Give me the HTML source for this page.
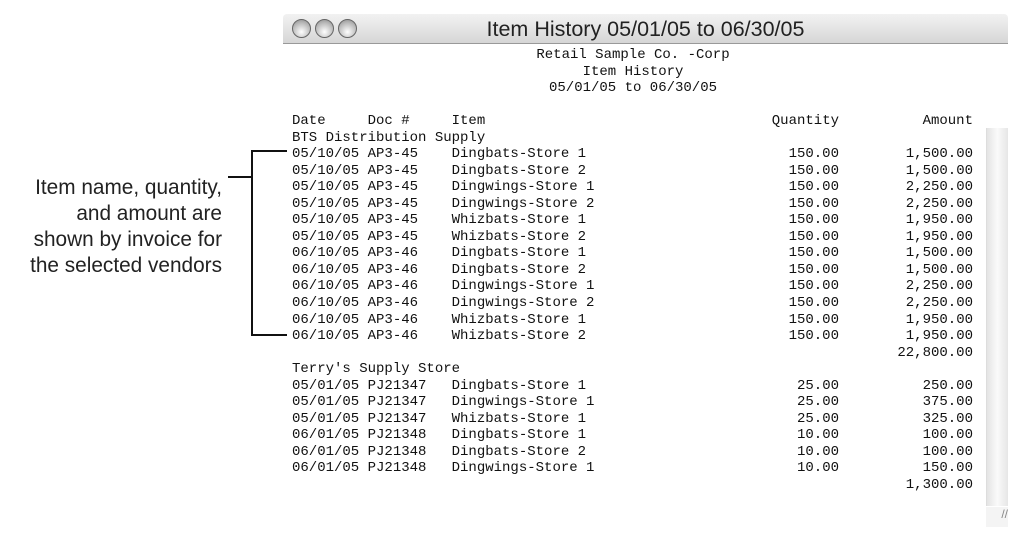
<!DOCTYPE html>
<html><head><meta charset="utf-8"><style>
body{margin:0;width:1024px;height:547px;background:#fff;position:relative;overflow:hidden;font-family:"Liberation Sans",sans-serif}
.win{position:absolute;left:283px;top:14px;width:725px;height:520px;}
.tb{position:absolute;left:0;top:0;width:725px;height:29px;background:linear-gradient(#f2f2f2,#d6d6d6);border-bottom:1px solid #999;border-radius:4px 4px 0 0}
.tb .t{position:absolute;left:0;right:0;top:3px;text-align:center;font-size:21.5px;color:#222;padding-left:0}
.btn{position:absolute;top:5px;width:17px;height:17px;border-radius:50%;border:1px solid #666;background:radial-gradient(circle at 50% 70%,#fff,#bbb 60%,#888)}
.m{position:absolute;font-family:"Liberation Mono",monospace;font-size:14px;line-height:16.55px;color:#111;white-space:pre;margin:0}
.sb{position:absolute;left:986px;top:128px;width:21px;height:378px;background:linear-gradient(90deg,#e4e4e4,#fafafa 50%,#e6e6e6);border-left:1px solid #ddd}
.ann{position:absolute;right:802px;top:175px;text-align:right;font-size:20.8px;line-height:26px;color:#222;white-space:nowrap}
.l{position:absolute;background:#111}
</style></head><body>
<div class="win">
<div class="tb"><div class="btn" style="left:9px"></div><div class="btn" style="left:32px"></div><div class="btn" style="left:55px"></div><div class="t">Item History 05/01/05 to 06/30/05</div></div>
</div>
<pre class="m" style="left:0;width:1266px;text-align:center;top:47px">Retail Sample Co. -Corp
Item History
05/01/05 to 06/30/05</pre>
<pre class="m" style="left:292px;top:113px">Date     Doc #     Item
BTS Distribution Supply
05/10/05 AP3-45    Dingbats-Store 1
05/10/05 AP3-45    Dingbats-Store 2
05/10/05 AP3-45    Dingwings-Store 1
05/10/05 AP3-45    Dingwings-Store 2
05/10/05 AP3-45    Whizbats-Store 1
05/10/05 AP3-45    Whizbats-Store 2
06/10/05 AP3-46    Dingbats-Store 1
06/10/05 AP3-46    Dingbats-Store 2
06/10/05 AP3-46    Dingwings-Store 1
06/10/05 AP3-46    Dingwings-Store 2
06/10/05 AP3-46    Whizbats-Store 1
06/10/05 AP3-46    Whizbats-Store 2

Terry's Supply Store
05/01/05 PJ21347   Dingbats-Store 1
05/01/05 PJ21347   Dingwings-Store 1
05/01/05 PJ21347   Whizbats-Store 1
06/01/05 PJ21348   Dingbats-Store 1
06/01/05 PJ21348   Dingbats-Store 2
06/01/05 PJ21348   Dingwings-Store 1</pre>
<pre class="m" style="right:185px;top:113px;text-align:right">Quantity

150.00
150.00
150.00
150.00
150.00
150.00
150.00
150.00
150.00
150.00
150.00
150.00


25.00
25.00
25.00
10.00
10.00
10.00</pre>
<pre class="m" style="right:51px;top:113px;text-align:right">Amount

1,500.00
1,500.00
2,250.00
2,250.00
1,950.00
1,950.00
1,500.00
1,500.00
2,250.00
2,250.00
1,950.00
1,950.00
22,800.00

250.00
375.00
325.00
100.00
100.00
150.00
1,300.00</pre>
<div class="sb"></div>
<div style="position:absolute;left:986px;top:507px;width:22px;height:20px;background:#f4f4f4;font-size:12px;color:#888;text-align:right">//</div>
<div class="ann">Item name, quantity,<br>and amount are<br>shown by invoice for<br>the selected vendors</div>
<div class="l" style="left:251px;top:150px;width:2px;height:186px"></div>
<div class="l" style="left:251px;top:150px;width:36px;height:2px"></div>
<div class="l" style="left:251px;top:334px;width:36px;height:2px"></div>
<div class="l" style="left:228px;top:176px;width:24px;height:2px"></div>
</body></html>
